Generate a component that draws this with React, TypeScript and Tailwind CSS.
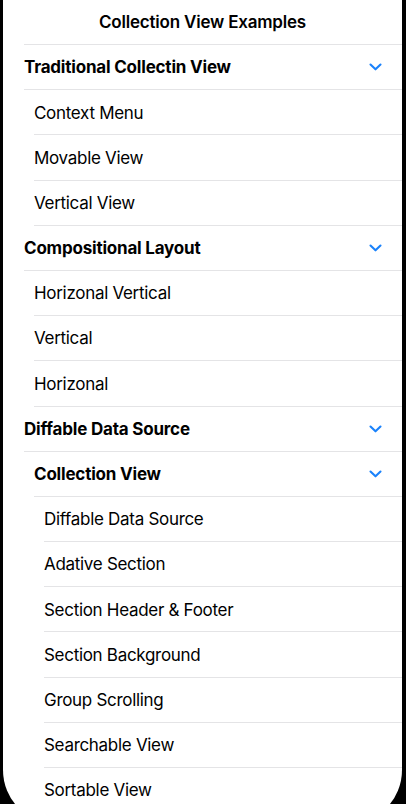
import React from "react";

type Row = { label: string; level: 0 | 1 | 2; header?: boolean };

const rows: Row[] = [
  { label: "Traditional Collectin View", level: 0, header: true },
  { label: "Context Menu", level: 1 },
  { label: "Movable View", level: 1 },
  { label: "Vertical View", level: 1 },
  { label: "Compositional Layout", level: 0, header: true },
  { label: "Horizonal Vertical", level: 1 },
  { label: "Vertical", level: 1 },
  { label: "Horizonal", level: 1 },
  { label: "Diffable Data Source", level: 0, header: true },
  { label: "Collection View", level: 1, header: true },
  { label: "Diffable Data Source", level: 2 },
  { label: "Adative Section", level: 2 },
  { label: "Section Header & Footer", level: 2 },
  { label: "Section Background", level: 2 },
  { label: "Group Scrolling", level: 2 },
  { label: "Searchable View", level: 2 },
  { label: "Sortable View", level: 2 },
];

const indent = {
  0: "ml-[21px]",
  1: "ml-[31px]",
  2: "ml-[41px]",
};

function Chevron() {
  return (
    <svg width="13" height="8" viewBox="0 0 13 8" fill="none">
      <path d="M1.5 1.5 L6.5 6.3 L11.5 1.5" stroke="#1a82fb" strokeWidth="2.1" strokeLinecap="round" strokeLinejoin="round" />
    </svg>
  );
}

export default function App() {
  return (
    <div className="h-screen overflow-hidden bg-black" style={{ fontFamily: "Inter, 'Noto Sans', sans-serif" }}>
      <div className="ml-[3px] mr-[4px] h-[824px] overflow-hidden rounded-b-[54px] bg-white text-black">
        <div className="flex h-[44px] items-center justify-center pt-[1px]">
          <span className="text-[17px] font-semibold tracking-[-0.2px]">Collection View Examples</span>
        </div>
        <div className="ml-[21px] border-b border-[#e4e4e6]" />
        {rows.map((r, i) => (
          <div key={i} className={`${indent[r.level]} flex h-[45.2px] items-center justify-between border-b border-[#e4e4e6] pr-[20px]`}>
            <span className={`pt-[2px] text-[17px] ${r.header ? "font-bold tracking-[-0.2px]" : "font-normal tracking-[-0.3px]"}`}>{r.label}</span>
            {r.header && <Chevron />}
          </div>
        ))}
      </div>
    </div>
  );
}
